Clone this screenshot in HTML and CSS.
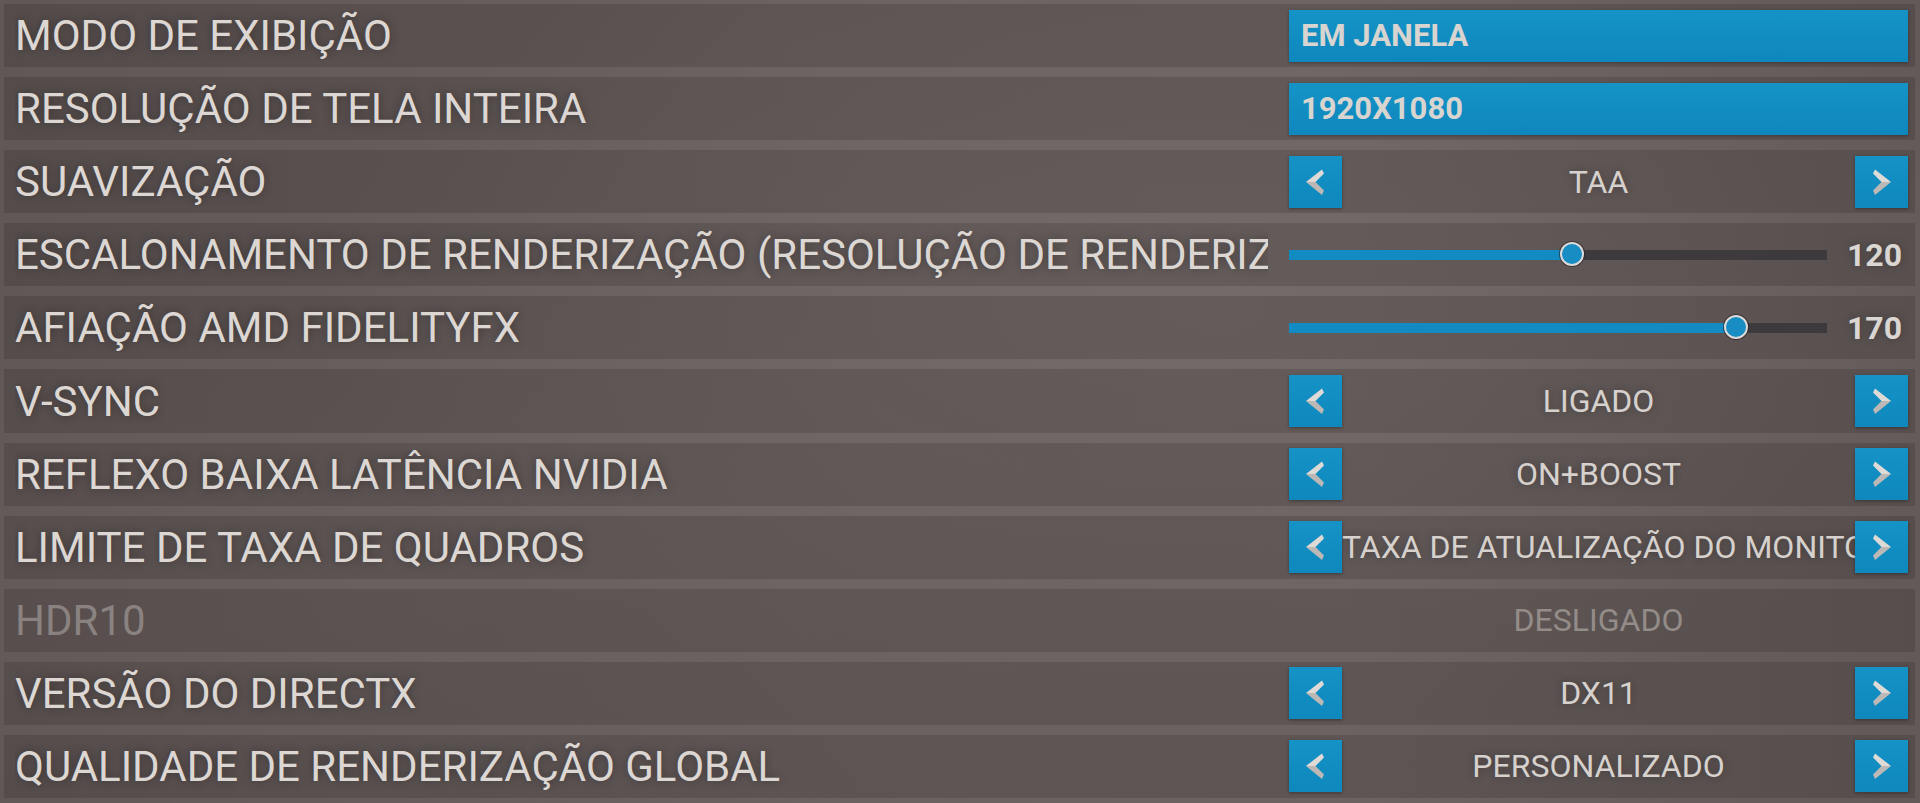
FILE: index.html
```html
<!DOCTYPE html>
<html lang="pt">

<head>
    <meta charset="UTF-8">
    <title>Gráficos</title>
    <link rel="stylesheet" href="styles.css">
</head>

<body>
    <div class="panel">
        <div class="row">
            <div class="label">MODO DE EXIBIÇÃO</div>
            <div class="control">
                <div class="dropdown">EM JANELA</div>
            </div>
        </div>
        <div class="row">
            <div class="label">RESOLUÇÃO DE TELA INTEIRA</div>
            <div class="control">
                <div class="dropdown">1920X1080</div>
            </div>
        </div>
        <div class="row">
            <div class="label">SUAVIZAÇÃO</div>
            <div class="control">
                <div class="arrow left"><svg viewBox="0 0 53 52"><polygon class="hi" points="17,26 33,13.5 35,17.5 26.5,26" /><polygon class="lo" points="17,26 26.5,26 35,34.5 33,39" /></svg></div>
                <div class="value">TAA</div>
                <div class="arrow right"><svg viewBox="0 0 53 52"><polygon class="hi" points="36,26 20,13.5 18,17.5 26.5,26" /><polygon class="lo" points="36,26 26.5,26 18,34.5 20,39" /></svg></div>
            </div>
        </div>
        <div class="row">
            <div class="label">ESCALONAMENTO DE RENDERIZAÇÃO (RESOLUÇÃO DE RENDERIZAÇÃO)</div>
            <div class="control">
                <div class="track">
                    <div class="fill" style="width: 52.7%"></div>
                    <div class="knob" style="left: 52.7%"></div>
                </div>
                <div class="number">120</div>
            </div>
        </div>
        <div class="row">
            <div class="label">AFIAÇÃO AMD FIDELITYFX</div>
            <div class="control">
                <div class="track">
                    <div class="fill" style="width: 83.2%"></div>
                    <div class="knob" style="left: 83.2%"></div>
                </div>
                <div class="number">170</div>
            </div>
        </div>
        <div class="row">
            <div class="label">V-SYNC</div>
            <div class="control">
                <div class="arrow left"><svg viewBox="0 0 53 52"><polygon class="hi" points="17,26 33,13.5 35,17.5 26.5,26" /><polygon class="lo" points="17,26 26.5,26 35,34.5 33,39" /></svg></div>
                <div class="value">LIGADO</div>
                <div class="arrow right"><svg viewBox="0 0 53 52"><polygon class="hi" points="36,26 20,13.5 18,17.5 26.5,26" /><polygon class="lo" points="36,26 26.5,26 18,34.5 20,39" /></svg></div>
            </div>
        </div>
        <div class="row">
            <div class="label">REFLEXO BAIXA LATÊNCIA NVIDIA</div>
            <div class="control">
                <div class="arrow left"><svg viewBox="0 0 53 52"><polygon class="hi" points="17,26 33,13.5 35,17.5 26.5,26" /><polygon class="lo" points="17,26 26.5,26 35,34.5 33,39" /></svg></div>
                <div class="value">ON+BOOST</div>
                <div class="arrow right"><svg viewBox="0 0 53 52"><polygon class="hi" points="36,26 20,13.5 18,17.5 26.5,26" /><polygon class="lo" points="36,26 26.5,26 18,34.5 20,39" /></svg></div>
            </div>
        </div>
        <div class="row">
            <div class="label">LIMITE DE TAXA DE QUADROS</div>
            <div class="control">
                <div class="arrow left"><svg viewBox="0 0 53 52"><polygon class="hi" points="17,26 33,13.5 35,17.5 26.5,26" /><polygon class="lo" points="17,26 26.5,26 35,34.5 33,39" /></svg></div>
                <div class="value">TAXA DE ATUALIZAÇÃO DO MONITOR</div>
                <div class="arrow right"><svg viewBox="0 0 53 52"><polygon class="hi" points="36,26 20,13.5 18,17.5 26.5,26" /><polygon class="lo" points="36,26 26.5,26 18,34.5 20,39" /></svg></div>
            </div>
        </div>
        <div class="row disabled">
            <div class="label">HDR10</div>
            <div class="control">
                <div class="value">DESLIGADO</div>
            </div>
        </div>
        <div class="row">
            <div class="label">VERSÃO DO DIRECTX</div>
            <div class="control">
                <div class="arrow left"><svg viewBox="0 0 53 52"><polygon class="hi" points="17,26 33,13.5 35,17.5 26.5,26" /><polygon class="lo" points="17,26 26.5,26 35,34.5 33,39" /></svg></div>
                <div class="value">DX11</div>
                <div class="arrow right"><svg viewBox="0 0 53 52"><polygon class="hi" points="36,26 20,13.5 18,17.5 26.5,26" /><polygon class="lo" points="36,26 26.5,26 18,34.5 20,39" /></svg></div>
            </div>
        </div>
        <div class="row">
            <div class="label">QUALIDADE DE RENDERIZAÇÃO GLOBAL</div>
            <div class="control">
                <div class="arrow left"><svg viewBox="0 0 53 52"><polygon class="hi" points="17,26 33,13.5 35,17.5 26.5,26" /><polygon class="lo" points="17,26 26.5,26 35,34.5 33,39" /></svg></div>
                <div class="value">PERSONALIZADO</div>
                <div class="arrow right"><svg viewBox="0 0 53 52"><polygon class="hi" points="36,26 20,13.5 18,17.5 26.5,26" /><polygon class="lo" points="36,26 26.5,26 18,34.5 20,39" /></svg></div>
            </div>
        </div>
    </div>
</body>

</html>
```

FILE: styles.css
```css
body,
html {
    height: 100%;
    width: 100%;
    margin: 0;
    overflow: hidden;
    font-family: Roboto, "Liberation Sans", sans-serif;
}

body {
    /* blurred game scene behind the settings panel */
    background:
        radial-gradient(ellipse 900px 420px at 62% 38%, rgba(128, 120, 118, 0.4), transparent),
        radial-gradient(ellipse 700px 300px at 20% 70%, rgba(120, 112, 110, 0.25), transparent),
        linear-gradient(90deg, #605857 0%, #6a6261 45%, #6b6362 70%, #625a59 100%);
}

.panel {
    height: 100%;
    box-sizing: border-box;
    padding: 4px 5px 5px 4px;
    display: flex;
    flex-direction: column;
    gap: 10px;
}

.row {
    flex: 1;
    display: flex;
    align-items: center;
    padding: 0 7px 0 11px;
    background-color: rgba(30, 15, 15, 0.17);
    min-height: 0;
}

.label {
    flex: 1;
    min-width: 0;
    margin-right: 21px;
    overflow: hidden;
    white-space: nowrap;
    font-size: 42px;
    color: #dcd7d3;
    text-shadow: 0 0 10px rgba(0, 0, 0, 0.35);
}

.control {
    width: 619px;
    height: 52px;
    display: flex;
    align-items: center;
    flex-shrink: 0;
}

.dropdown {
    flex: 1;
    height: 100%;
    box-sizing: border-box;
    padding-left: 12px;
    display: flex;
    align-items: center;
    background: linear-gradient(180deg, #1593c7 0%, #0e87bd 100%);
    color: #d8d4d0;
    font-size: 31px;
    font-weight: bold;
    box-shadow: 0 1px 3px rgba(0, 0, 0, 0.3);
}

.arrow {
    width: 53px;
    height: 52px;
    flex-shrink: 0;
    background: linear-gradient(180deg, #1592c6 0%, #0e88bd 100%);
    box-shadow: 0 1px 3px rgba(0, 0, 0, 0.35);
    position: relative;
    z-index: 1;
}

.arrow svg {
    display: block;
    width: 100%;
    height: 100%;
}

.arrow .hi {
    fill: #dedad6;
}

.arrow .lo {
    fill: #bcb8b5;
}

.value {
    flex: 1;
    min-width: 0;
    overflow: hidden;
    white-space: nowrap;
    text-align: center;
    font-size: 32px;
    color: #d6d1cd;
    text-shadow: 0 0 8px rgba(0, 0, 0, 0.3);
}

.disabled .label {
    color: #8a8280;
    text-shadow: none;
}

.disabled .value {
    color: #938c88;
    text-shadow: none;
}

.track {
    flex: 1;
    height: 10px;
    background-color: #3d3a3e;
    position: relative;
}

.fill {
    height: 100%;
    background-color: #128bc2;
}

.knob {
    position: absolute;
    top: 50%;
    width: 20px;
    height: 20px;
    margin: -12.5px 0 0 -12.5px;
    border: 2.5px solid #dcdad8;
    border-radius: 50%;
    background-color: #178dc4;
    box-shadow: 0 0 0 1px rgba(40, 28, 28, 0.6);
}

.number {
    width: 81px;
    box-sizing: border-box;
    padding-right: 6px;
    text-align: right;
    font-size: 32px;
    font-weight: bold;
    color: #dad6d2;
    text-shadow: 0 0 8px rgba(0, 0, 0, 0.3);
}
```
